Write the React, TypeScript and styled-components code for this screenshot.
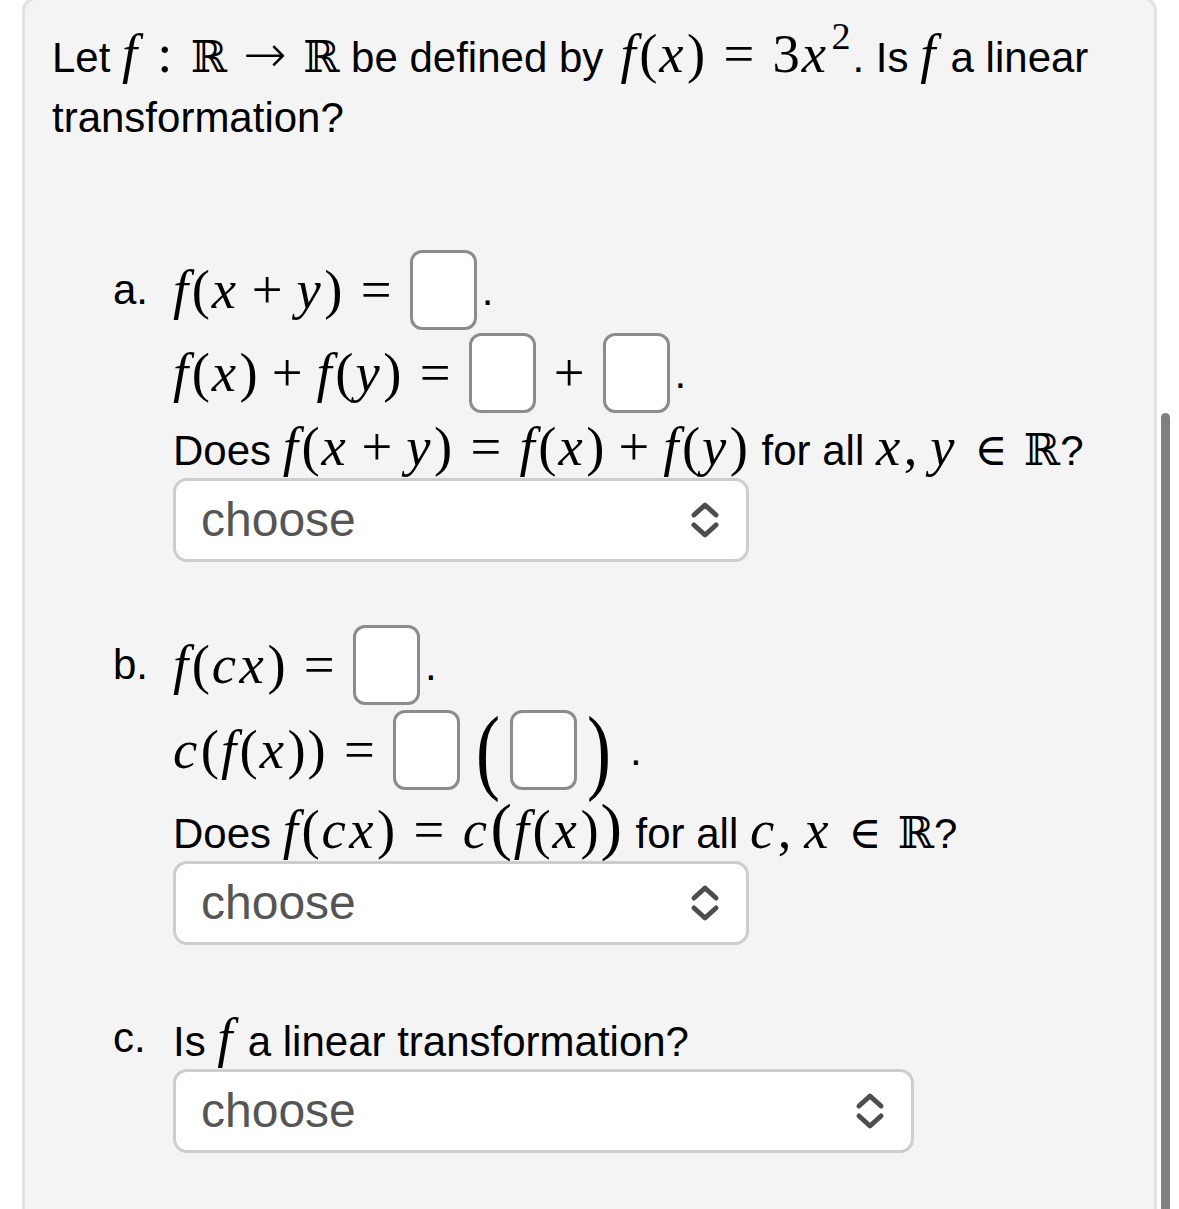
import React from "react";
import styled, { createGlobalStyle } from "styled-components";

const GlobalStyle = createGlobalStyle`
  html, body {
    margin: 0;
    padding: 0;
    background: #fff;
    overflow: hidden;
  }
  body {
    font-family: "Liberation Sans", Arial, sans-serif;
    color: #000;
  }
`;

const Page = styled.div`
  padding: 0 22px;
  height: 1209px;
  overflow: hidden;
`;

const Panel = styled.div`
  margin-top: -3px;
  background: #f4f4f4;
  border: 3px solid #e2e2e2;
  border-radius: 14px;
  padding: 24px 27px 140px;
  font-size: 42px;
  line-height: 60px;
`;

const Question = styled.p`
  margin: 0 0 102px;
`;

// math bits
const M = styled.span<{ $lead?: boolean }>`
  font-family: "Liberation Serif", "DejaVu Serif", serif;
  font-size: 1.3em;
  letter-spacing: 0.035em;
  white-space: nowrap;
  margin-left: ${(p) => (p.$lead ? 0.1 : 0)}em;
`;

const V = styled.i`
  font-style: italic;
  margin-right: 0.03em;
`;

const Op = styled.span<{ $kind?: "rel" | "bin" }>`
  margin: 0 ${(p) => (p.$kind === "bin" ? 0.222 : 0.3)}em;
`;

const Comma = styled.span`
  margin-right: 0.2em;
`;

const Sym = styled.span<{ $size?: number }>`
  font-family: "DejaVu Sans", "DejaVu Serif", sans-serif;
  font-size: ${(p) => p.$size ?? 0.82}em;
  font-weight: 300;
  letter-spacing: 0;
`;

const BB = styled.span`
  font-family: "DejaVu Serif", "DejaVu Sans", serif;
  font-size: 0.8em;
  letter-spacing: 0;
`;

const Sup = styled.sup`
  font-size: 0.7em;
  line-height: 0;
  vertical-align: 0.6em;
  margin-left: 0.05em;
`;

const Paren = styled.span<{ $big?: boolean }>`
  font-size: ${(p) => (p.$big ? 1.18 : 1)}em;
  line-height: 0;
`;

const List = styled.div`
  display: flex;
  flex-direction: column;
  gap: 63px;
`;

const Item = styled.div`
  display: grid;
  grid-template-columns: 60px 1fr;
  margin-left: 61px;
`;

const Marker = styled.div<{ $h: number }>`
  height: ${(p) => p.$h}px;
  display: flex;
  align-items: center;
`;

const Body = styled.div`
  display: flex;
  flex-direction: column;
  align-items: flex-start;
`;

const Row = styled.div<{ $h?: number; $gap?: number }>`
  display: flex;
  align-items: center;
  height: ${(p) => p.$h ?? 60}px;
  margin-bottom: ${(p) => p.$gap ?? 0}px;
  white-space: nowrap;
`;

const TextLine = styled.div<{ $gap?: number }>`
  height: 60px;
  margin-bottom: ${(p) => p.$gap ?? 0}px;
  white-space: nowrap;
`;

const AnswerBox = styled.span`
  flex: none;
  display: inline-block;
  box-sizing: border-box;
  width: 67px;
  height: 80px;
  border: 3px solid #8c8c8c;
  border-radius: 12px;
  background: #fff;
`;

const Dot = styled.span`
  margin-left: 5px;
  padding-top: 2px;
`;

const BigParen = styled.span<{ $close?: boolean }>`
  display: inline-block;
  font-family: "Liberation Serif", "DejaVu Serif", serif;
  font-size: 72px;
  line-height: 72px;
  transform: scaleY(1.32);
  margin: ${(p) => (p.$close ? "0 14px 0 10px" : "0 10px 0 16px")};
`;

const PlusSign = styled.span`
  font-family: "Liberation Serif", serif;
  font-size: 1.3em;
  margin: 0 18px;
`;

const Select = styled.div<{ $w: number }>`
  box-sizing: border-box;
  width: ${(p) => p.$w}px;
  height: 84px;
  margin-top: 1px;
  display: flex;
  align-items: center;
  justify-content: space-between;
  padding: 0 26px 0 25px;
  background: #fff;
  border: 3px solid #cdcdcd;
  border-radius: 14px;
  font-size: 48px;
  color: #555;
`;

const ScrollThumb = styled.div`
  position: fixed;
  top: 413px;
  bottom: -10px;
  right: 9px;
  width: 9px;
  background: #808080;
  border-radius: 5px;
`;

const Chevron: React.FC = () => (
  <svg width="30" height="38" viewBox="0 0 30 38" fill="none">
    <path
      d="M4 14 L15 4 L26 14 M4 24 L15 34 L26 24"
      stroke="#4d4d4d"
      strokeWidth="5"
      strokeLinecap="round"
      strokeLinejoin="round"
    />
  </svg>
);

const Choose: React.FC<{ w: number }> = ({ w }) => (
  <Select $w={w}>
    <span>choose</span>
    <Chevron />
  </Select>
);

const R = () => <BB>ℝ</BB>;

const App: React.FC = () => {
  return (
    <>
      <GlobalStyle />
      <Page>
        <Panel>
          <Question>
            Let{" "}
            <M>
              <V>f</V>
              <Op>:</Op>
              <R />
              <Op>
                <Sym $size={0.95}>→</Sym>
              </Op>
              <R />
            </M>{" "}
            be defined by{" "}
            <M $lead>
              <V>f</V>(<V>x</V>)<Op>=</Op>3<V>x</V>
              <Sup>2</Sup>
            </M>
            . Is{" "}
            <M>
              <V>f</V>
            </M>{" "}
            a linear transformation?
          </Question>

          <List>
            <Item>
              <Marker $h={80}>a.</Marker>
              <Body>
                <Row $h={80} $gap={3}>
                  <M>
                    <V>f</V>(<V>x</V>
                    <Op $kind="bin">+</Op>
                    <V>y</V>)<Op>=</Op>
                  </M>
                  <AnswerBox />
                  <Dot>.</Dot>
                </Row>
                <Row $h={80} $gap={4}>
                  <M>
                    <V>f</V>(<V>x</V>)<Op $kind="bin">+</Op>
                    <V>f</V>(<V>y</V>)<Op>=</Op>
                  </M>
                  <AnswerBox />
                  <PlusSign>+</PlusSign>
                  <AnswerBox />
                  <Dot>.</Dot>
                </Row>
                <TextLine>
                  Does{" "}
                  <M>
                    <V>f</V>(<V>x</V>
                    <Op $kind="bin">+</Op>
                    <V>y</V>)<Op>=</Op>
                    <V>f</V>(<V>x</V>)<Op $kind="bin">+</Op>
                    <V>f</V>(<V>y</V>)
                  </M>{" "}
                  for all{" "}
                  <M>
                    <V>x</V>
                    <Comma>,</Comma>
                    <V>y</V>
                    <Op>
                      <Sym>∈</Sym>
                    </Op>
                    <R />
                  </M>
                  ?
                </TextLine>
                <Choose w={576} />
              </Body>
            </Item>

            <Item>
              <Marker $h={80}>b.</Marker>
              <Body>
                <Row $h={80} $gap={3}>
                  <M>
                    <V>f</V>(<V>c</V>
                    <V>x</V>)<Op>=</Op>
                  </M>
                  <AnswerBox />
                  <Dot>.</Dot>
                </Row>
                <Row $h={84} $gap={8}>
                  <M>
                    <V>c</V>(<V>f</V>(<V>x</V>))<Op>=</Op>
                  </M>
                  <AnswerBox />
                  <BigParen>(</BigParen>
                  <AnswerBox />
                  <BigParen $close>)</BigParen>
                  <Dot>.</Dot>
                </Row>
                <TextLine>
                  Does{" "}
                  <M>
                    <V>f</V>(<V>c</V>
                    <V>x</V>)<Op>=</Op>
                    <V>c</V>
                    <Paren $big>(</Paren>
                    <V>f</V>(<V>x</V>)<Paren $big>)</Paren>
                  </M>{" "}
                  for all{" "}
                  <M>
                    <V>c</V>
                    <Comma>,</Comma>
                    <V>x</V>
                    <Op>
                      <Sym>∈</Sym>
                    </Op>
                    <R />
                  </M>
                  ?
                </TextLine>
                <Choose w={576} />
              </Body>
            </Item>

            <Item>
              <Marker $h={60}>c.</Marker>
              <Body>
                <TextLine>
                  Is{" "}
                  <M>
                    <V>f</V>
                  </M>{" "}
                  a linear transformation?
                </TextLine>
                <Choose w={741} />
              </Body>
            </Item>
          </List>
        </Panel>
      </Page>
      <ScrollThumb />
    </>
  );
};

export default App;
